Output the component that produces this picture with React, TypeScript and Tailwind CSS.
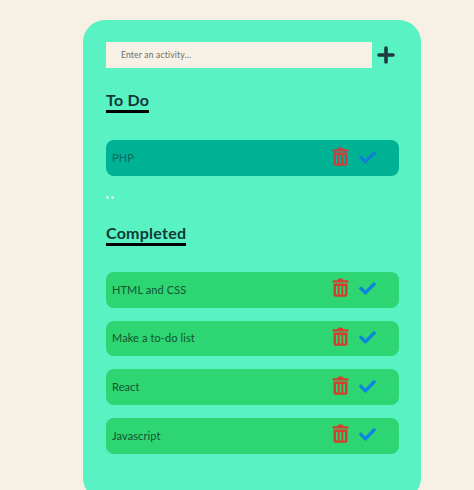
import { FaCheck } from 'react-icons/fa'

function Trash({ className }: { className: string }) {
    return (
        <svg className={className} viewBox="0 0 17 19" fill="currentColor">
            <path d="M0.5 3.2 C0.5 2.6 1 2.3 1.5 2.3 H5.6 C5.9 1 6.6 0.4 7.6 0.4 H9.4 C10.4 0.4 11.1 1 11.4 2.3 H15.5 C16 2.3 16.5 2.6 16.5 3.2 V4.4 H0.5 Z" />
            <path fillRule="evenodd" d="M1.5 5.6 H15.5 V16.8 C15.5 18 14.6 18.8 13.5 18.8 H3.5 C2.4 18.8 1.5 18 1.5 16.8 Z M4 8 V16.4 H5.7 V8 Z M7.65 8 V16.4 H9.35 V8 Z M11.3 8 V16.4 H13 V8 Z" />
        </svg>
    )
}

function Row({ label, pending }: { label: string; pending?: boolean }) {
    return (
        <div className={`flex items-center rounded-lg pl-[6px] ${pending ? 'h-[36px] bg-[#00b294]' : 'h-[35.5px] bg-[#2ed573]'}`}>
            <span className={`flex-1 text-[11px] tracking-[0.1px] ${pending ? 'text-[#14665f]' : 'text-[#14532d]'}`}>{label}</span>
            <div className="flex items-center pr-[23px]">
                <Trash className={`mb-[4px] h-[19px] w-[17px] ${pending ? 'text-[#c9403f]' : 'text-[#d13f2f]'}`} />
                <FaCheck className={`mb-[2px] ml-[10px] h-[17px] w-[17px] ${pending ? 'text-[#0f7fd0]' : 'text-[#0c84e0]'}`} />
            </div>
        </div>
    )
}

function Heading({ children }: { children: string }) {
    return (
        <h2 className="w-fit border-b-[3px] border-black pb-[2px] text-[16px] leading-[16px] font-bold tracking-[0.25px] text-[#12383a]">
            {children}
        </h2>
    )
}

export default function App() {
    return (
        <div className="h-[490px] overflow-hidden bg-[#f7f0e4] pt-[20px] pl-[83px] font-['Lato',sans-serif]">
            <div className="h-[480px] w-[338px] rounded-[22px] bg-[#58f2c3] pt-[22px] pr-[22px] pl-[23px]">
                {/* Add activity */}
                <div className="flex items-center">
                    <div className="flex h-[26px] w-[266px] items-center bg-[#f7f0e4] pl-[15px] text-[8.5px] tracking-[0.2px] text-[#6b6b66]">
                        Enter an activity...
                    </div>
                    <svg className="ml-[5px] h-[18px] w-[18px] text-[#1f3a40]" viewBox="0 0 18 18" fill="none" stroke="currentColor" strokeWidth="3.6" strokeLinecap="round">
                        <path d="M9 2v14M2 9h14" />
                    </svg>
                </div>

                <div className="mt-[24px]">
                    <Heading>To Do</Heading>
                </div>
                <div className="mt-[27px]">
                    <Row label="PHP" pending />
                </div>
                <div className="mt-[19.5px] flex gap-[2px]">
                    <span className="h-[3px] w-[3px] rounded-full bg-[#d8f5ea]" />
                    <span className="h-[3px] w-[3px] rounded-full bg-[#d8f5ea]" />
                </div>

                <div className="mt-[26.5px]">
                    <Heading>Completed</Heading>
                </div>
                <div className="mt-[26px] flex flex-col gap-[13.2px]">
                    <Row label="HTML and CSS" />
                    <Row label="Make a to-do list" />
                    <Row label="React" />
                    <Row label="Javascript" />
                </div>
            </div>
        </div>
    )
}
